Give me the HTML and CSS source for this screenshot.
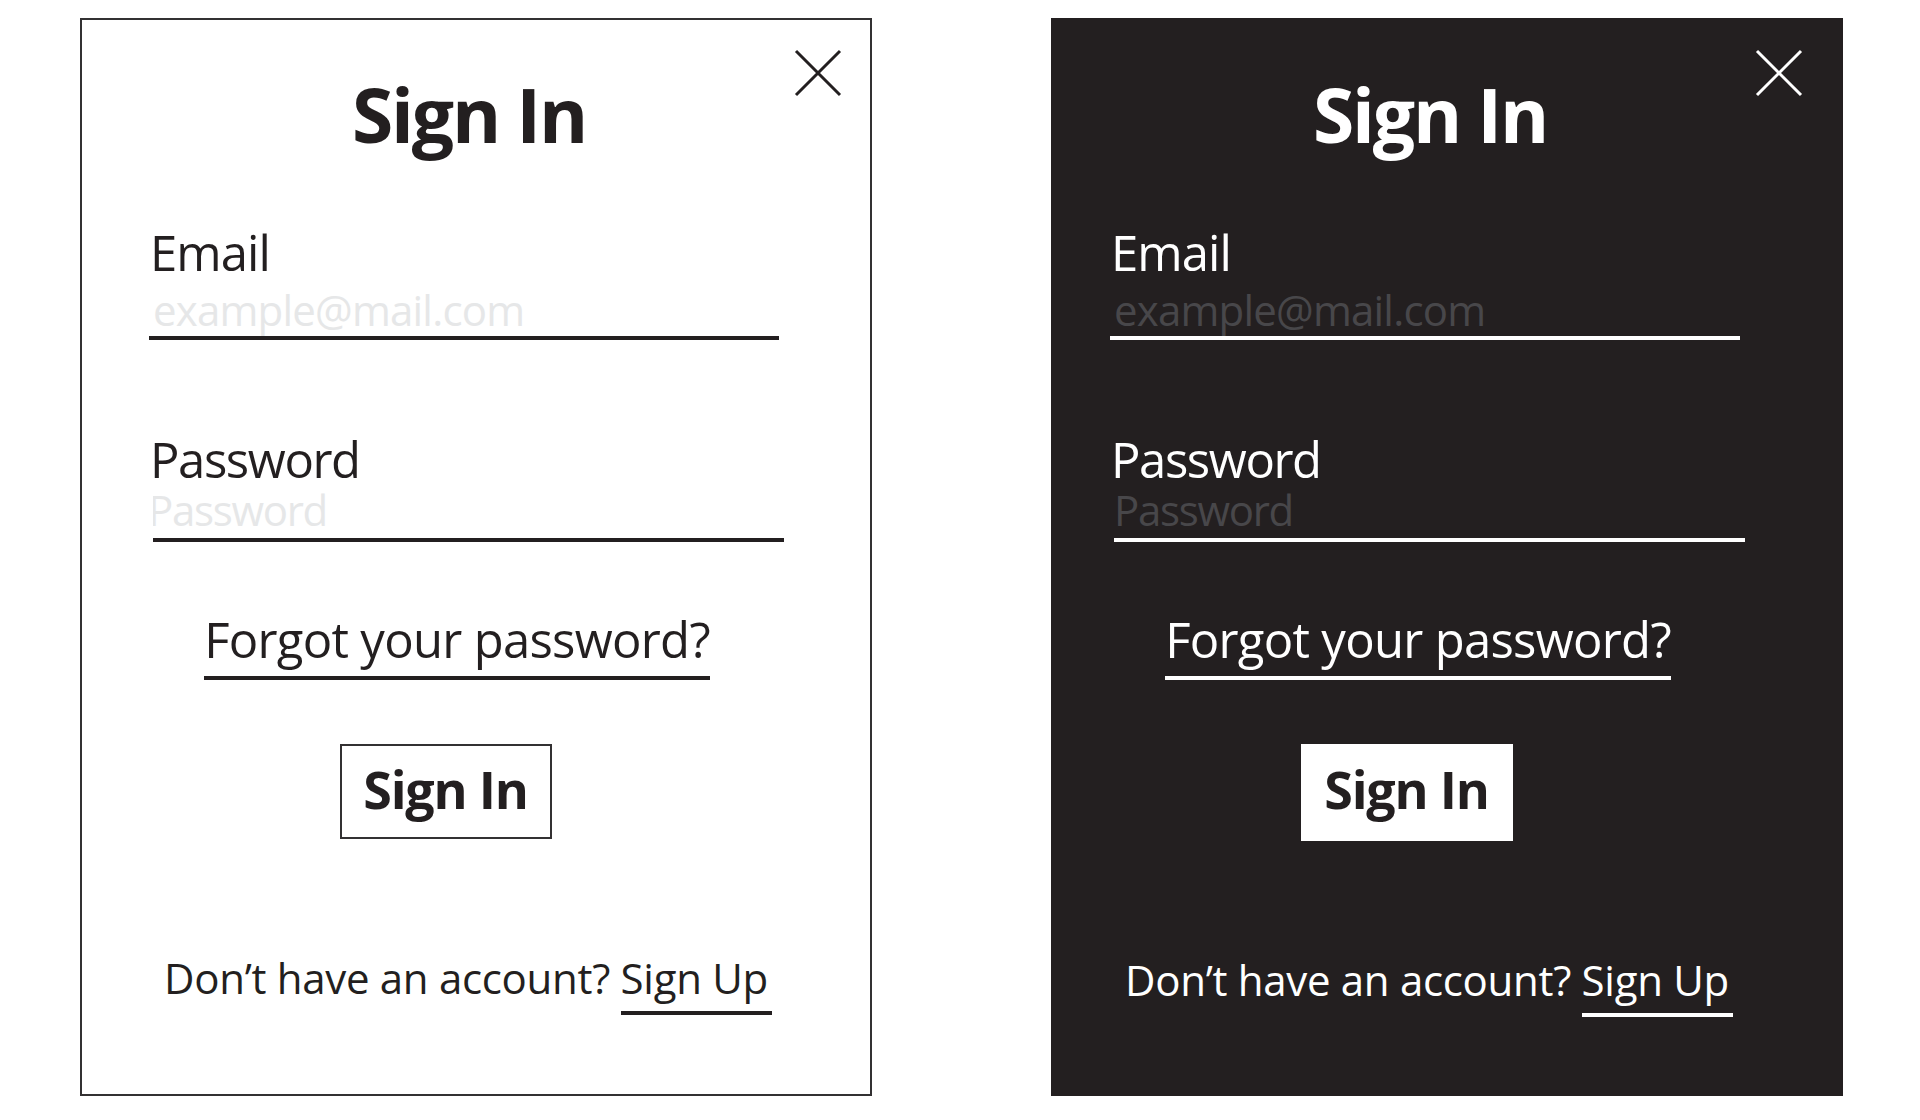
FILE: index.html
```html
<!DOCTYPE html>
<html lang="en">
<head>
<meta charset="utf-8">
<title>Sign In</title>
<link rel="stylesheet" href="styles.css">
</head>
<body>
<main class="stage">
  <section class="panel panel-light">
    <button class="close" aria-label="Close">
      <svg viewBox="0 0 48 48" width="48" height="48"><path d="M2 2 L46 46 M46 2 L2 46"/></svg>
    </button>
    <h1 class="title">Sign In</h1>
    <label class="label label-email" for="email1">Email</label>
    <input class="field field-email" id="email1" type="email" placeholder="example@mail.com">
    <label class="label label-pass" for="pass1">Password</label>
    <input class="field field-pass" id="pass1" type="password" placeholder="Password">
    <a class="forgot" href="#">Forgot your password?</a>
    <button class="submit">Sign In</button>
    <p class="signup">Don’t have an account? <a class="signup-link" href="#">Sign Up</a></p>
  </section>

  <section class="panel panel-dark">
    <button class="close" aria-label="Close">
      <svg viewBox="0 0 48 48" width="48" height="48"><path d="M2 2 L46 46 M46 2 L2 46"/></svg>
    </button>
    <h1 class="title">Sign In</h1>
    <label class="label label-email" for="email2">Email</label>
    <input class="field field-email" id="email2" type="email" placeholder="example@mail.com">
    <label class="label label-pass" for="pass2">Password</label>
    <input class="field field-pass" id="pass2" type="password" placeholder="Password">
    <a class="forgot" href="#">Forgot your password?</a>
    <button class="submit">Sign In</button>
    <p class="signup">Don’t have an account? <a class="signup-link" href="#">Sign Up</a></p>
  </section>
</main>
</body>
</html>
```

FILE: styles.css
```css
* { box-sizing: border-box; }

html, body {
  margin: 0;
  padding: 0;
  background: #ffffff;
}

body {
  font-family: "Open Sans", "Noto Sans", "Liberation Sans", sans-serif;
  color: #231f20;
}

.stage {
  display: flex;
  gap: 179px;
  padding: 18px 0 0 80px;
}

.panel {
  position: relative;
  width: 792px;
  height: 1078px;
  display: flex;
  flex-direction: column;
  align-items: center;
  padding: 0 68px;
  border: 2px solid #333132;
  background: #ffffff;
  color: #231f20;
  --line: #231f20;
  --ph: #e6e7e8;
}

.panel-dark {
  background: #231f20;
  border-color: #231f20;
  color: #ffffff;
  padding: 0 78px 0 58px;
  --line: #ffffff;
  --ph: #48474a;
}

.close {
  position: absolute;
  top: 29px;
  right: 28px;
  width: 48px;
  height: 48px;
  padding: 0;
  border: 0;
  background: transparent;
  cursor: pointer;
}

.panel-dark .close { right: 38px; }

.close svg {
  display: block;
  fill: none;
  stroke: var(--line);
  stroke-width: 3;
}

.title {
  margin: 57px 14px 0 0;
  font-size: 75px;
  line-height: 75px;
  font-weight: 700;
  letter-spacing: -2.2px;
}

.label {
  align-self: stretch;
  display: block;
  font-size: 49px;
  line-height: 49px;
  letter-spacing: -0.9px;
}

.label-email { margin-top: 76px; }
.label-pass { margin-top: 95px; letter-spacing: -1.4px; }

.field {
  align-self: flex-start;
  display: block;
  width: 630px;
  height: 52px;
  margin: 0;
  padding: 0 0 6px 4px;
  border: 0;
  border-bottom: 4px solid var(--line);
  border-radius: 0;
  background: transparent;
  outline: none;
  font-family: inherit;
  font-size: 42px;
  line-height: 42px;
  letter-spacing: -0.8px;
  color: inherit;
}

.field::placeholder { color: var(--ph); opacity: 1; }

.field-email { margin: 11px 0 0 -1px; }

.field-pass {
  margin: 4px 0 0 3px;
  width: 631px;
  height: 54px;
  padding: 0 0 8px 0;
  letter-spacing: -1.3px;
}

.field-pass::placeholder { letter-spacing: -1.3px; }

.panel-light .field-pass { text-indent: -5px; }

.forgot {
  margin: 73px 38px 0 0;
  padding-bottom: 12px;
  border-bottom: 4px solid var(--line);
  font-size: 49px;
  line-height: 49px;
  letter-spacing: -0.7px;
  color: inherit;
  text-decoration: none;
}

.submit {
  margin: 64px 61px 0 0;
  width: 212px;
  height: 95px;
  padding: 17px 0 0 0;
  display: flex;
  justify-content: center;
  align-items: flex-start;
  border: 2px solid #333132;
  background: #ffffff;
  color: #231f20;
  font-family: inherit;
  font-size: 52px;
  line-height: 52px;
  font-weight: 700;
  letter-spacing: -1.2px;
  cursor: pointer;
}

.panel-dark .submit {
  border-color: #ffffff;
  height: 97px;
}

.signup {
  margin: 118px 16px 0 0;
  font-size: 42px;
  line-height: 42px;
  letter-spacing: -0.3px;
}

.signup-link {
  display: inline-block;
  padding: 0 4px 12px 0;
  border-bottom: 4px solid var(--line);
  color: inherit;
  text-decoration: none;
}
```
